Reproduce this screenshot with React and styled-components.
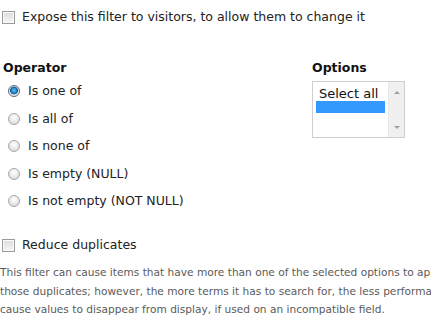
import React from 'react'
import styled, { createGlobalStyle } from 'styled-components'

const Global = createGlobalStyle`
  html, body {
    margin: 0;
    padding: 0;
    background: #fff;
    overflow: hidden;
  }
  body {
    font-family: "DejaVu Sans", Verdana, sans-serif;
    color: #222;
  }
`

const Page = styled.div`
  width: 431px;
  height: 325px;
  overflow: hidden;
  padding-top: 10px;
  box-sizing: border-box;
`

const CheckRow = styled.label`
  display: flex;
  align-items: center;
  gap: 7px;
  padding-left: 2px;
  font-size: 12.5px;
  line-height: 14px;
  white-space: nowrap;
`

const Box = styled.span`
  width: 11px;
  height: 11px;
  flex: none;
  border: 1px solid #9a9a9a;
  background: linear-gradient(#dcdcdc, #f6f6f6);
  box-shadow: inset 0 0 0 1px #fbfbfb;
`

const Columns = styled.div`
  display: flex;
  margin-top: 37px;
`

const OperatorCol = styled.div`
  width: 309px;
  padding-left: 3px;
`

const Heading = styled.div`
  font-weight: bold;
  font-size: 12.5px;
  line-height: 14px;
  color: #111;
`

const RadioList = styled.div`
  display: flex;
  flex-direction: column;
  gap: 13.5px;
  margin-top: 9px;
  padding-left: 5px;
`

const RadioRow = styled.label`
  display: flex;
  align-items: center;
  gap: 8px;
  font-size: 12.5px;
  line-height: 14px;
  white-space: nowrap;
`

const Radio = styled.span`
  width: 12px;
  height: 12px;
  flex: none;
  border-radius: 50%;
  box-sizing: border-box;
  border: 1px solid ${p => (p.$on ? '#5a6a7a' : '#a8a8a8')};
  background: ${p =>
    p.$on
      ? 'radial-gradient(circle at 50% 45%, #5fc0f2 0, #1c86c8 2.6px, #1a4e7a 3.6px, #dfe3e8 4.2px, #f4f4f4 100%)'
      : 'radial-gradient(circle at 50% 35%, #ffffff 0, #eaeaea 50%, #cfcfcf 100%)'};
`

const OptionsCol = styled.div`
  display: flex;
  flex-direction: column;
`

const ListBox = styled.div`
  display: flex;
  margin-top: 6px;
  width: 93px;
  height: 57px;
  box-sizing: border-box;
  border: 1px solid #cfcfcf;
  background: #fff;
`

const ListItems = styled.div`
  flex: 1;
  padding: 4px 3px 0 3px;
`

const Item = styled.div`
  font-size: 13px;
  line-height: 15px;
  padding-left: 3px;
  height: ${p => (p.$empty ? '12px' : '15px')};
  background: ${p => (p.$sel ? '#3399ff' : 'transparent')};
  color: #111;
  white-space: nowrap;
`

const Scroll = styled.div`
  width: 16px;
  background: #f0f0f0;
  border-left: 1px solid #e6e6e6;
  display: flex;
  flex-direction: column;
  justify-content: space-between;
  align-items: center;
  padding: 9px 0 8px;
  box-sizing: border-box;
`

const Arrow = styled.span`
  width: 0;
  height: 0;
  border-left: 3px solid transparent;
  border-right: 3px solid transparent;
  ${p => (p.$up ? 'border-bottom: 3px solid #a0a0a0;' : 'border-top: 3px solid #a0a0a0;')}
`

const Reduce = styled(CheckRow)`
  margin-top: 30px;
`

const Help = styled.p`
  margin: 11px 0 0;
  font-size: 10.6px;
  line-height: 18.5px;
  color: #5a5a5a;
  white-space: nowrap;
`

const operators = [
  'Is one of',
  'Is all of',
  'Is none of',
  'Is empty (NULL)',
  'Is not empty (NOT NULL)',
]

export default function App() {
  return (
    <Page>
      <Global />
      <CheckRow>
        <Box />
        Expose this filter to visitors, to allow them to change it
      </CheckRow>
      <Columns>
        <OperatorCol>
          <Heading>Operator</Heading>
          <RadioList>
            {operators.map((op, i) => (
              <RadioRow key={op}>
                <Radio $on={i === 0} />
                {op}
              </RadioRow>
            ))}
          </RadioList>
        </OperatorCol>
        <OptionsCol>
          <Heading>Options</Heading>
          <ListBox>
            <ListItems>
              <Item>Select all</Item>
              <Item $sel $empty />
            </ListItems>
            <Scroll>
              <Arrow $up />
              <Arrow />
            </Scroll>
          </ListBox>
        </OptionsCol>
      </Columns>
      <Reduce>
        <Box />
        Reduce duplicates
      </Reduce>
      <Help>
        This filter can cause items that have more than one of the selected options to appear as duplicate results. If this filter causes duplicate results to occur, this checkbox can reduce
        <br />
        those duplicates; however, the more terms it has to search for, the less performant the query will be, so use this with caution. Shouldn't be set on single-value fields, as it may
        <br />
        cause values to disappear from display, if used on an incompatible field.
      </Help>
    </Page>
  )
}
